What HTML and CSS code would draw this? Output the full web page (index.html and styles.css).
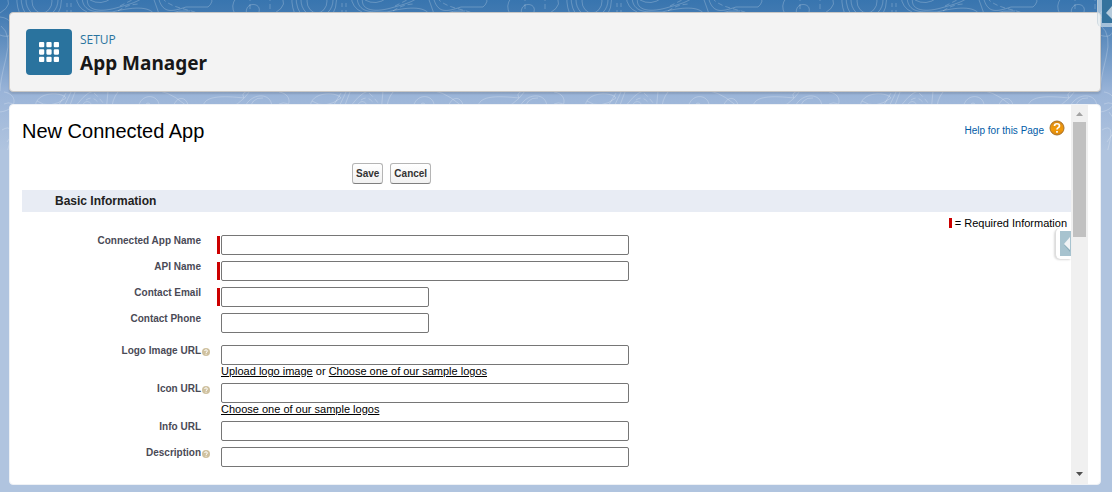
FILE: index.html
```
<!DOCTYPE html>
<html lang="en">
<head>
<meta charset="utf-8">
<title>App Manager</title>
<link rel="stylesheet" href="styles.css">
</head>
<body>
<svg class="topo" aria-hidden="true">
  <defs>
    <pattern id="topo-lines" width="275" height="184" patternUnits="userSpaceOnUse">
      <g fill="none" stroke="#fff" stroke-opacity=".22">
        <ellipse cx="42" cy="1" rx="10" ry="12"/>
        <ellipse cx="42" cy="0" rx="16" ry="17"/>
        <path d="M21 -4Q21 10 28 16M17 -4Q16 8 22 18M62 -4Q62 8 56 18M76 -4Q77 8 87 12"/>
        <path d="M67 -4V18M71 -4V18" stroke-dasharray="4 3"/>
        <path d="M88 -4C84 10 98 13 116 8C130 4 139 2 144 -4M82 -4C82 14 98 12 112 12C132 7 149 6 154 14M90 0Q101 6 112 -2"/>
        <path d="M118 11Q128 4 140 4M120 6L132 0" stroke-dasharray="5 3"/>
        <path d="M153 -3Q157 8 159 14M158 -4C162 14 171 12 186 7H208Q214 2 211 -4M168 14Q178 10 190 11"/>
        <path d="M162 -2C171 8 184 8 201 14M250 -4V16M270 -4V16" stroke-dasharray="5 3"/>
        <path d="M236 -2Q230 6 235 14M247 16C242 0 265 2 258 14M0 13Q15 4 4 -5M0 35C18 42 17 18 0 17"/>
        <path d="M4 92C18 94 18 110 0 112M4 104Q13 100 18 110M36 112C30 91 62 91 66 98Q50 110 37 101"/>
        <path d="M54 113L66 93M61 113L71 92M67 113L75 92M72 112Q83 94 93 91M79 112Q87 91 96 112"/>
        <path d="M86 100Q94 94 101 107M94 93Q104 102 108 112" stroke-dasharray="5 3"/>
        <path d="M106 113L108 91M111 113Q112 99 118 92M138 112C137 90 165 93 158 112M142 112Q148 94 154 112M172 112C175 91 191 97 188 112M160 91Q175 94 193 112"/>
        <path d="M204 112C198 94 225 96 244 98Q239 91 255 90M220 112Q240 106 250 91M243 112C248 90 277 91 271 112M249 112Q251 97 263 98"/>
        <path d="M2 130Q15 122 9 145T4 178M9 112Q22 125 7 142"/>
        <path d="M1 26Q12 34 6 58T0 91"/>
      </g>
    </pattern>
  </defs>
  <rect width="100%" height="150" fill="url(#topo-lines)"/>
</svg>

<div class="page">
  <header class="page-header">
    <span class="app-icon">
      <svg width="20" height="20" viewBox="0 0 19 19" fill="#fff" aria-hidden="true">
        <rect x="0" y="0" width="5" height="5" rx="1"/><rect x="7" y="0" width="5" height="5" rx="1"/><rect x="14" y="0" width="5" height="5" rx="1"/>
        <rect x="0" y="7" width="5" height="5" rx="1"/><rect x="7" y="7" width="5" height="5" rx="1"/><rect x="14" y="7" width="5" height="5" rx="1"/>
        <rect x="0" y="14" width="5" height="5" rx="1"/><rect x="7" y="14" width="5" height="5" rx="1"/><rect x="14" y="14" width="5" height="5" rx="1"/>
      </svg>
    </span>
    <div>
      <p class="eyebrow">SETUP</p>
      <h1 class="page-title">App Manager</h1>
    </div>
  </header>

  <main class="card">
    <form class="content">
      <div class="title-bar">
        <h2 class="title">New Connected App</h2>
        <a class="help-link" href="#help">
          <span>Help for this Page</span>
          <svg width="16" height="16" viewBox="0 0 16 16" aria-hidden="true">
            <defs><linearGradient id="orb" x2="0" y2="1"><stop stop-color="#d88917"/><stop offset=".6" stop-color="#f39a09"/><stop offset="1" stop-color="#d9860b"/></linearGradient></defs>
            <circle cx="8" cy="8" r="7" fill="url(#orb)" stroke="#a8712a"/>
            <path d="M5.500 6C5.500 3 10.500 3 10.500 6C10.500 7.700 8 7.600 8 9.500M8 11V12.700" fill="none" stroke="#fff" stroke-width="1.700"/>
          </svg>
        </a>
      </div>
      <div class="buttons">
        <button class="btn" type="button">Save</button>
        <button class="btn" type="button">Cancel</button>
      </div>
      <h3 class="section-title">Basic Information</h3>
      <p class="legend"><span class="legend-mark"></span>= Required Information</p>

      <div class="fields">
        <div class="row">
          <label class="label" for="app-name">Connected App Name</label><span></span>
          <div class="control"><span class="required"></span><input class="text" id="app-name" type="text" required></div>
        </div>
        <div class="row">
          <label class="label" for="api-name">API Name</label><span></span>
          <div class="control"><span class="required"></span><input class="text" id="api-name" type="text" required></div>
        </div>
        <div class="row">
          <label class="label" for="email">Contact Email</label><span></span>
          <div class="control"><span class="required"></span><input class="text short" id="email" type="email" required></div>
        </div>
        <div class="row">
          <label class="label" for="phone">Contact Phone</label><span></span>
          <div class="control"><input class="text short" id="phone" type="tel"></div>
        </div>
        <div class="row spaced">
          <label class="label" for="logo">Logo Image URL</label>
          <svg class="hint" viewBox="0 0 8 8" aria-hidden="true"><circle cx="4" cy="4" r="4" fill="#cfc19f"/><path d="M2.600 3C2.600 1.400 5.400 1.400 5.400 3C5.400 4 4 4 4 5M4 5.700V6.700" fill="none" stroke="#fff"/></svg>
          <div class="control"><input class="text" id="logo" type="text"></div>
          <p class="note"><a href="#upload">Upload logo image</a> or <a href="#logos">Choose one of our sample logos</a></p>
        </div>
        <div class="row">
          <label class="label" for="icon">Icon URL</label>
          <svg class="hint" viewBox="0 0 8 8" aria-hidden="true"><circle cx="4" cy="4" r="4" fill="#cfc19f"/><path d="M2.600 3C2.600 1.400 5.400 1.400 5.400 3C5.400 4 4 4 4 5M4 5.700V6.700" fill="none" stroke="#fff"/></svg>
          <div class="control"><input class="text" id="icon" type="text"></div>
          <p class="note"><a href="#icons">Choose one of our sample logos</a></p>
        </div>
        <div class="row">
          <label class="label" for="info">Info URL</label><span></span>
          <div class="control"><input class="text" id="info" type="text"></div>
        </div>
        <div class="row">
          <label class="label" for="description">Description</label>
          <svg class="hint" viewBox="0 0 8 8" aria-hidden="true"><circle cx="4" cy="4" r="4" fill="#cfc19f"/><path d="M2.600 3C2.600 1.400 5.400 1.400 5.400 3C5.400 4 4 4 4 5M4 5.700V6.700" fill="none" stroke="#fff"/></svg>
          <div class="control"><input class="text" id="description" type="text"></div>
        </div>
      </div>
      <button class="drawer" type="button" aria-label="Open help panel">
        <svg width="11" height="25" viewBox="0 0 11 25" aria-hidden="true"><path fill="#a7c3cf" d="M0 0h11v25H0z"/><path fill="#8badba" d="M10 8v13l-6-7z"/><path fill="#f1f3f5" d="M10 6v13l-6-6z"/></svg>
      </button>
    </form>
    <div class="scrollbar" aria-hidden="true">
      <svg width="17" height="17" viewBox="0 0 17 17"><path fill="#a3a3a3" d="M5 11h7L8.500 7z"/></svg>
      <div class="thumb"></div>
      <svg class="scroll-down" width="17" height="17" viewBox="0 0 17 17"><path fill="#505050" d="M5 5h7L8.500 9z"/></svg>
    </div>
  </main>
</div>

<button class="corner-drawer" type="button" aria-label="Open side panel">
  <svg width="10" height="23" viewBox="0 0 10 23" aria-hidden="true"><path fill="#35739d" d="M0 0h10v23H0z"/><path fill="#b4cadb" d="M10 6v13l-6-6z"/></svg>
</button>
</body>
</html>
```

FILE: styles.css
```
* {
  box-sizing: border-box;
}

body {
  position: relative;
  margin: 0;
  overflow: hidden;
  color: #000;
  background: linear-gradient(#3875af 0, #4079b1 12px, #9ab4d8 92px, #b0c4df 150px) #b0c4df;
  font-family: "Liberation Sans", Arial, sans-serif;
  font-size: 11px;
  line-height: 12px;
}

h1, h2, h3, p {
  margin: 0;
}

.topo {
  position: absolute;
  inset: 0;
  width: 100%;
  height: 150px;
}

.page {
  position: relative;
  display: flex;
  flex-direction: column;
  gap: 12px;
  min-height: 100vh;
  padding: 12px 11px 7px 9px;
}

.page-header {
  display: flex;
  align-items: flex-start;
  gap: 8px;
  padding: 16px 16px 14px;
  border: 1px solid #c9c7c5;
  border-radius: 4px;
  background: #f3f3f3;
  box-shadow: 0 2px 2px rgba(0, 0, 0, .12);
}

.app-icon {
  display: flex;
  align-items: center;
  justify-content: center;
  width: 46px;
  height: 46px;
  border-radius: 4px;
  background: #2a739e;
}

.eyebrow {
  padding-top: 2px;
  color: #2a739e;
  font: 12px/18px "Open Sans", "Noto Sans", sans-serif;
}

.page-title {
  color: #181818;
  font: bold 19px/28px "Noto Sans", "Open Sans", sans-serif;
}

.card {
  display: flex;
  flex: 1;
  padding: 0 12px;
  border: 1px solid #eef1f5;
  border-radius: 4px;
  background: #fff;
}

.content {
  position: relative;
  flex: 1;
}

.title-bar {
  display: flex;
  align-items: center;
  justify-content: space-between;
  padding: 14px 6px 0 0;
}

.title {
  font-size: 20px;
  font-weight: normal;
  line-height: 24px;
}

.help-link {
  display: flex;
  gap: 5px;
  color: #015ba7;
  font-size: 10px;
  line-height: 22px;
  text-decoration: none;
}

.buttons {
  display: flex;
  gap: 7px;
  padding: 20px 0 6px 330px;
}

.btn {
  height: 21px;
  padding: 0 3px;
  border: 1px solid #b5b5b5;
  border-bottom-color: #7f7f7f;
  border-radius: 3px;
  color: #333;
  background: linear-gradient(#fff, #f1f1f1);
  font: bold 10px/18px "Liberation Sans", Arial, sans-serif;
}

.section-title {
  padding: 0 33px;
  color: #222;
  background: #e8ecf4;
  font-size: 12px;
  line-height: 22px;
}

.legend {
  display: flex;
  align-items: center;
  justify-content: flex-end;
  gap: 3px;
  padding: 5px 4px 0 0;
}

.legend-mark {
  width: 3px;
  height: 10px;
  background: #c00;
}

.fields {
  display: flex;
  flex-direction: column;
  gap: 6px;
  padding: 6px 0 16px;
}

.row {
  display: grid;
  grid-template-columns: 179px 16px 1fr;
}

.spaced {
  margin-top: 6px;
}

.label {
  color: #4a4a56;
  font-size: 10px;
  font-weight: bold;
  text-align: right;
}

.hint {
  width: 8px;
  height: 8px;
  margin: 3px 1px;
}

.control {
  display: flex;
  align-items: center;
  justify-content: flex-start;
  gap: 1px;
  padding-left: 4px;
}

.required {
  width: 3px;
  height: 18px;
  margin-left: -4px;
  background: #c00;
}

.text {
  width: 408px;
  height: 20px;
  padding: 1px 2px;
  border: 1px solid #767676;
  border-radius: 2px;
  background: #fff;
  font: 11px/16px "Liberation Sans", Arial, sans-serif;
}

.short {
  width: 208px;
}

.note {
  grid-column: 3;
  padding-left: 4px;
}

.note a {
  color: #000;
  text-underline-offset: 1px;
}

.drawer {
  position: absolute;
  top: 123px;
  right: 0;
  display: flex;
  padding: 3px 0 3px 4px;
  border: 0;
  border-left: 1px solid #ddd;
  border-radius: 5px 0 0 5px;
  background: #fff;
  box-shadow: -1px 1px 2px rgba(0, 0, 0, .15);
}

.scrollbar {
  display: flex;
  flex-direction: column;
  align-items: center;
  width: 17px;
  background: #f0f0f0;
}

.thumb {
  width: 13px;
  height: 115px;
  background: #c1c1c1;
}

.scroll-down {
  margin-top: auto;
}

.corner-drawer {
  position: absolute;
  top: 0;
  right: 0;
  display: flex;
  padding: 0 0 4px 4px;
  border: 0;
  border-left: 1px solid rgba(190, 205, 215, .6);
  border-radius: 0 0 0 5px;
  background: rgba(225, 235, 240, .6);
}
```
